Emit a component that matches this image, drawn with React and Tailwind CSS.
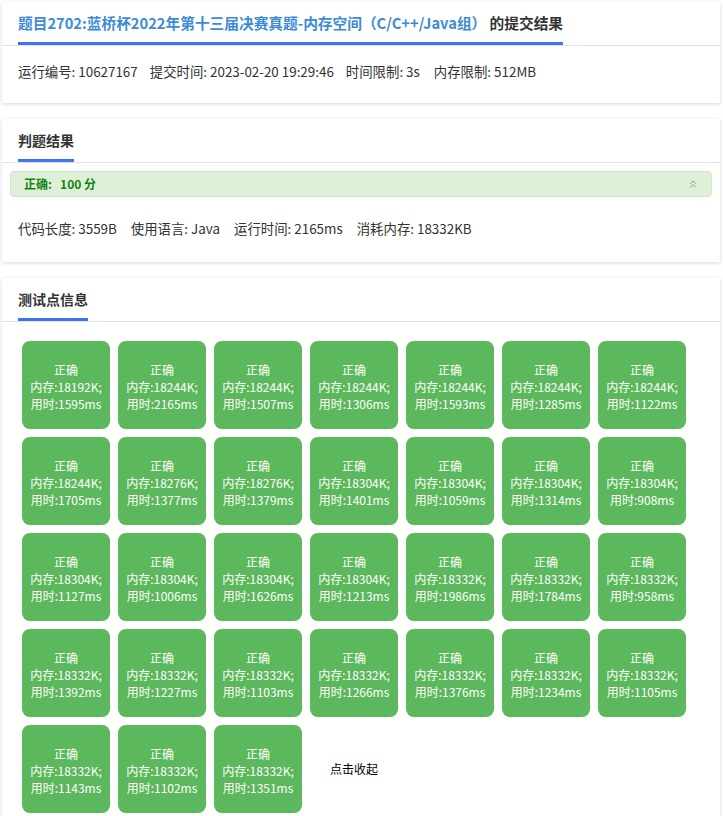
import { ChevronsUp } from "lucide-react";

const font = { fontFamily: '"Noto Sans CJK SC", "Liberation Sans", sans-serif' };

const cases = [
  ["18192K", "1595ms"],
  ["18244K", "2165ms"],
  ["18244K", "1507ms"],
  ["18244K", "1306ms"],
  ["18244K", "1593ms"],
  ["18244K", "1285ms"],
  ["18244K", "1122ms"],
  ["18244K", "1705ms"],
  ["18276K", "1377ms"],
  ["18276K", "1379ms"],
  ["18304K", "1401ms"],
  ["18304K", "1059ms"],
  ["18304K", "1314ms"],
  ["18304K", "908ms"],
  ["18304K", "1127ms"],
  ["18304K", "1006ms"],
  ["18304K", "1626ms"],
  ["18304K", "1213ms"],
  ["18332K", "1986ms"],
  ["18332K", "1784ms"],
  ["18332K", "958ms"],
  ["18332K", "1392ms"],
  ["18332K", "1227ms"],
  ["18332K", "1103ms"],
  ["18332K", "1266ms"],
  ["18332K", "1376ms"],
  ["18332K", "1234ms"],
  ["18332K", "1105ms"],
  ["18332K", "1143ms"],
  ["18332K", "1102ms"],
  ["18332K", "1351ms"],
];

function Card({ title, children, className = "" }) {
  return (
    <div className={`ml-[2px] mr-[3px] bg-white shadow-[0_1px_4px_rgba(0,0,0,0.16)] ${className}`}>
      <div className="border-b border-[#e2e2e2] px-[16px]">
        <div className="inline-block border-b-[3px] border-[#3f72f5] pt-[11px] pb-[9px] text-[14px] leading-[20px] font-bold text-[#333]">
          {title}
        </div>
      </div>
      {children}
    </div>
  );
}

export default function App() {
  return (
    <div className="min-h-screen bg-white pt-[2px] pb-[20px]" style={font}>
      <Card
        title={
          <span className="text-[14.7px]">
            <span className="text-[#3d8bd8]">题目2702:蓝桥杯2022年第十三届决赛真题-内存空间（C/C++/Java组）</span>
            <span> 的提交结果</span>
          </span>
        }
      >
        <div className="px-[16px] pt-[15px] pb-[22px] text-[13.4px] leading-[20px] text-[#333]">
          <span className="mr-[12px]">运行编号: 10627167</span>
          <span className="mr-[12px]">提交时间: 2023-02-20 19:29:46</span>
          <span className="mr-[14px]">时间限制: 3s</span>
          <span>内存限制: 512MB</span>
        </div>
      </Card>

      <Card title="判题结果" className="mt-[16px]">
        <div className="mx-[8px] mt-[8px] flex h-[26px] items-center justify-between rounded-[4px] border border-[#d3e6c6] bg-[#dff0d8] pl-[13px] pr-[12px]">
          <span className="text-[12px] font-bold text-[#128412]">
            正确:&nbsp;&nbsp; 100 分
          </span>
          <ChevronsUp size={12} strokeWidth={2} className="text-[#9a9a9a]" />
        </div>
        <div className="px-[16px] pt-[21px] pb-[24px] text-[13.4px] leading-[20px] text-[#333]">
          <span className="mr-[14px]">代码长度: 3559B</span>
          <span className="mr-[14px]">使用语言: Java</span>
          <span className="mr-[14px]">运行时间: 2165ms</span>
          <span>消耗内存: 18332KB</span>
        </div>
      </Card>

      <Card title="测试点信息" className="mt-[16px]">
        <div className="flex flex-wrap gap-[8px] pl-[20px] pr-[20px] pt-[19px] pb-[8px]">
          {cases.map(([mem, time], i) => (
            <div
              key={i}
              className="flex h-[88px] w-[88px] flex-col items-center justify-center rounded-[8px] bg-[#5cb85c] pt-[2px] text-[12px] leading-[17px] text-white"
            >
              <span>正确</span>
              <span>内存:{mem};</span>
              <span>用时:{time}</span>
            </div>
          ))}
          <div className="flex h-[88px] w-[88px] items-center justify-center text-[12px] text-black">
            点击收起
          </div>
        </div>
      </Card>
    </div>
  );
}
